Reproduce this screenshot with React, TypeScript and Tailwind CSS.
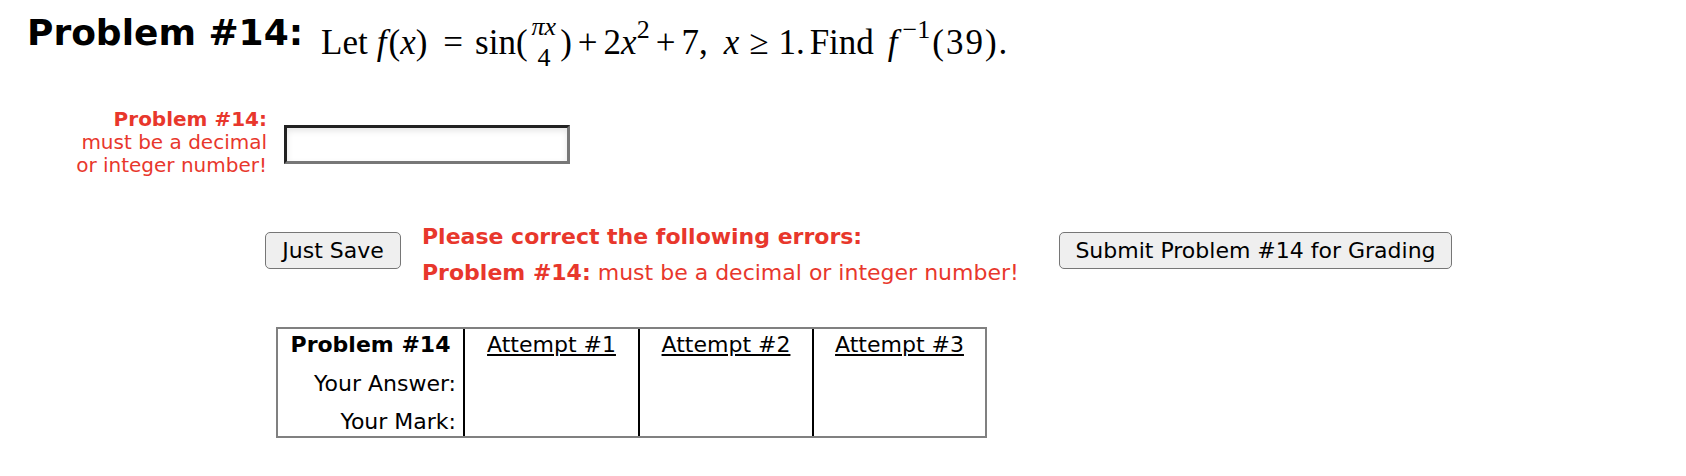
import React from "react";

function Frac() {
  return (
    <span className="mx-[4px] inline-flex flex-col items-center align-[19px]">
      <span className="text-[26px] leading-[26px] italic">πx</span>
      <span className="mt-[5px] text-[26px] leading-[26px]">4</span>
    </span>
  );
}

function Math() {
  return (
    <span className="font-['Liberation_Serif',serif] text-[35px] leading-[35px] whitespace-nowrap">
      <span>Let</span>
      <span className="ml-[9px] italic">f</span>
      <span className="ml-[2px]">(</span>
      <span className="italic">x</span>
      <span>)</span>
      <span className="ml-[16px] mr-[12px]">=</span>
      <span>sin(</span>
      <Frac />
      <span>)</span>
      <span className="mx-[6px]">+</span>
      <span>2</span>
      <span className="italic">x</span>
      <sup className="top-[-16px] text-[26px]">2</sup>
      <span className="mx-[6px]">+</span>
      <span>7,</span>
      <span className="ml-[16px] italic">x</span>
      <span className="mx-[10px]">≥</span>
      <span>1.</span>
      <span className="ml-[5px]">Find</span>
      <span className="ml-[14px] italic">f</span>
      <sup className="top-[-16px] ml-[5px] text-[26px]">−1</sup>
      <span className="ml-[2px] tracking-[2px]">(39).</span>
    </span>
  );
}

export default function App() {
  return (
    <div className="w-[1686px] min-h-[476px] bg-white text-black font-['DejaVu_Sans',Verdana,sans-serif]">
      {/* Title */}
      <div className="flex h-[108px] items-start pl-[27px] pt-[8px]">
        <h1 className="mt-[8px] text-[36px] font-bold leading-[34px]">Problem #14:</h1>
        <div className="ml-[18px] mt-[6px]">
          <Math />
        </div>
      </div>

      {/* Answer entry */}
      <div className="flex h-[109px] items-start">
        <div className="w-[267px] text-right text-[20px] leading-[23px] text-[#e8372c]">
          <div className="font-bold">Problem #14:</div>
          <div>must be a decimal</div>
          <div>or integer number!</div>
        </div>
        <div className="ml-[17px] mt-[17px] h-[39px] w-[286px] border-[3px] border-solid border-t-[#222222] border-l-[#222222] border-b-[#777777] border-r-[#777777] bg-white shadow-[inset_0_3px_6px_rgba(0,0,0,0.10)]" />
      </div>

      {/* Buttons and errors */}
      <div className="flex h-[110px] items-start">
        <button className="ml-[265px] mt-[15px] h-[37px] w-[136px] rounded-[5px] border border-solid border-[#767676] bg-[#efefef] text-[22px] leading-none text-black">
          Just Save
        </button>
        <div className="ml-[21px] w-[637px] pt-[2px] text-[22px] leading-[36px] text-[#e8372c]">
          <div className="font-bold">Please correct the following errors:</div>
          <div>
            <span className="font-bold">Problem #14:</span> must be a decimal or integer number!
          </div>
        </div>
        <button className="mt-[15px] h-[37px] w-[393px] rounded-[5px] border border-solid border-[#767676] bg-[#efefef] text-[22px] leading-none text-black">
          Submit Problem #14 for Grading
        </button>
      </div>

      {/* Attempts table */}
      <div className="ml-[276px] flex w-[711px] border-2 border-solid border-[#808080] text-[22px]">
        <div className="flex w-[185px] flex-col">
          <div className="h-[36px] text-center font-bold leading-[32px]">Problem #14</div>
          <div className="h-[36px] pr-[7px] pt-[1px] text-right leading-[35px]">Your Answer:</div>
          <div className="h-[35px] pr-[7px] pt-[6px] text-right leading-[29px]">Your Mark:</div>
        </div>
        <div className="flex w-[175px] flex-col border-l-2 border-solid border-black">
          <div className="h-[36px] text-center leading-[32px] underline">Attempt #1</div>
          <div className="h-[36px]" />
          <div className="h-[35px]" />
        </div>
        <div className="flex w-[174px] flex-col border-l-2 border-solid border-black">
          <div className="h-[36px] text-center leading-[32px] underline">Attempt #2</div>
          <div className="h-[36px]" />
          <div className="h-[35px]" />
        </div>
        <div className="flex flex-1 flex-col border-l-2 border-solid border-black">
          <div className="h-[36px] text-center leading-[32px] underline">Attempt #3</div>
          <div className="h-[36px]" />
          <div className="h-[35px]" />
        </div>
      </div>
    </div>
  );
}
